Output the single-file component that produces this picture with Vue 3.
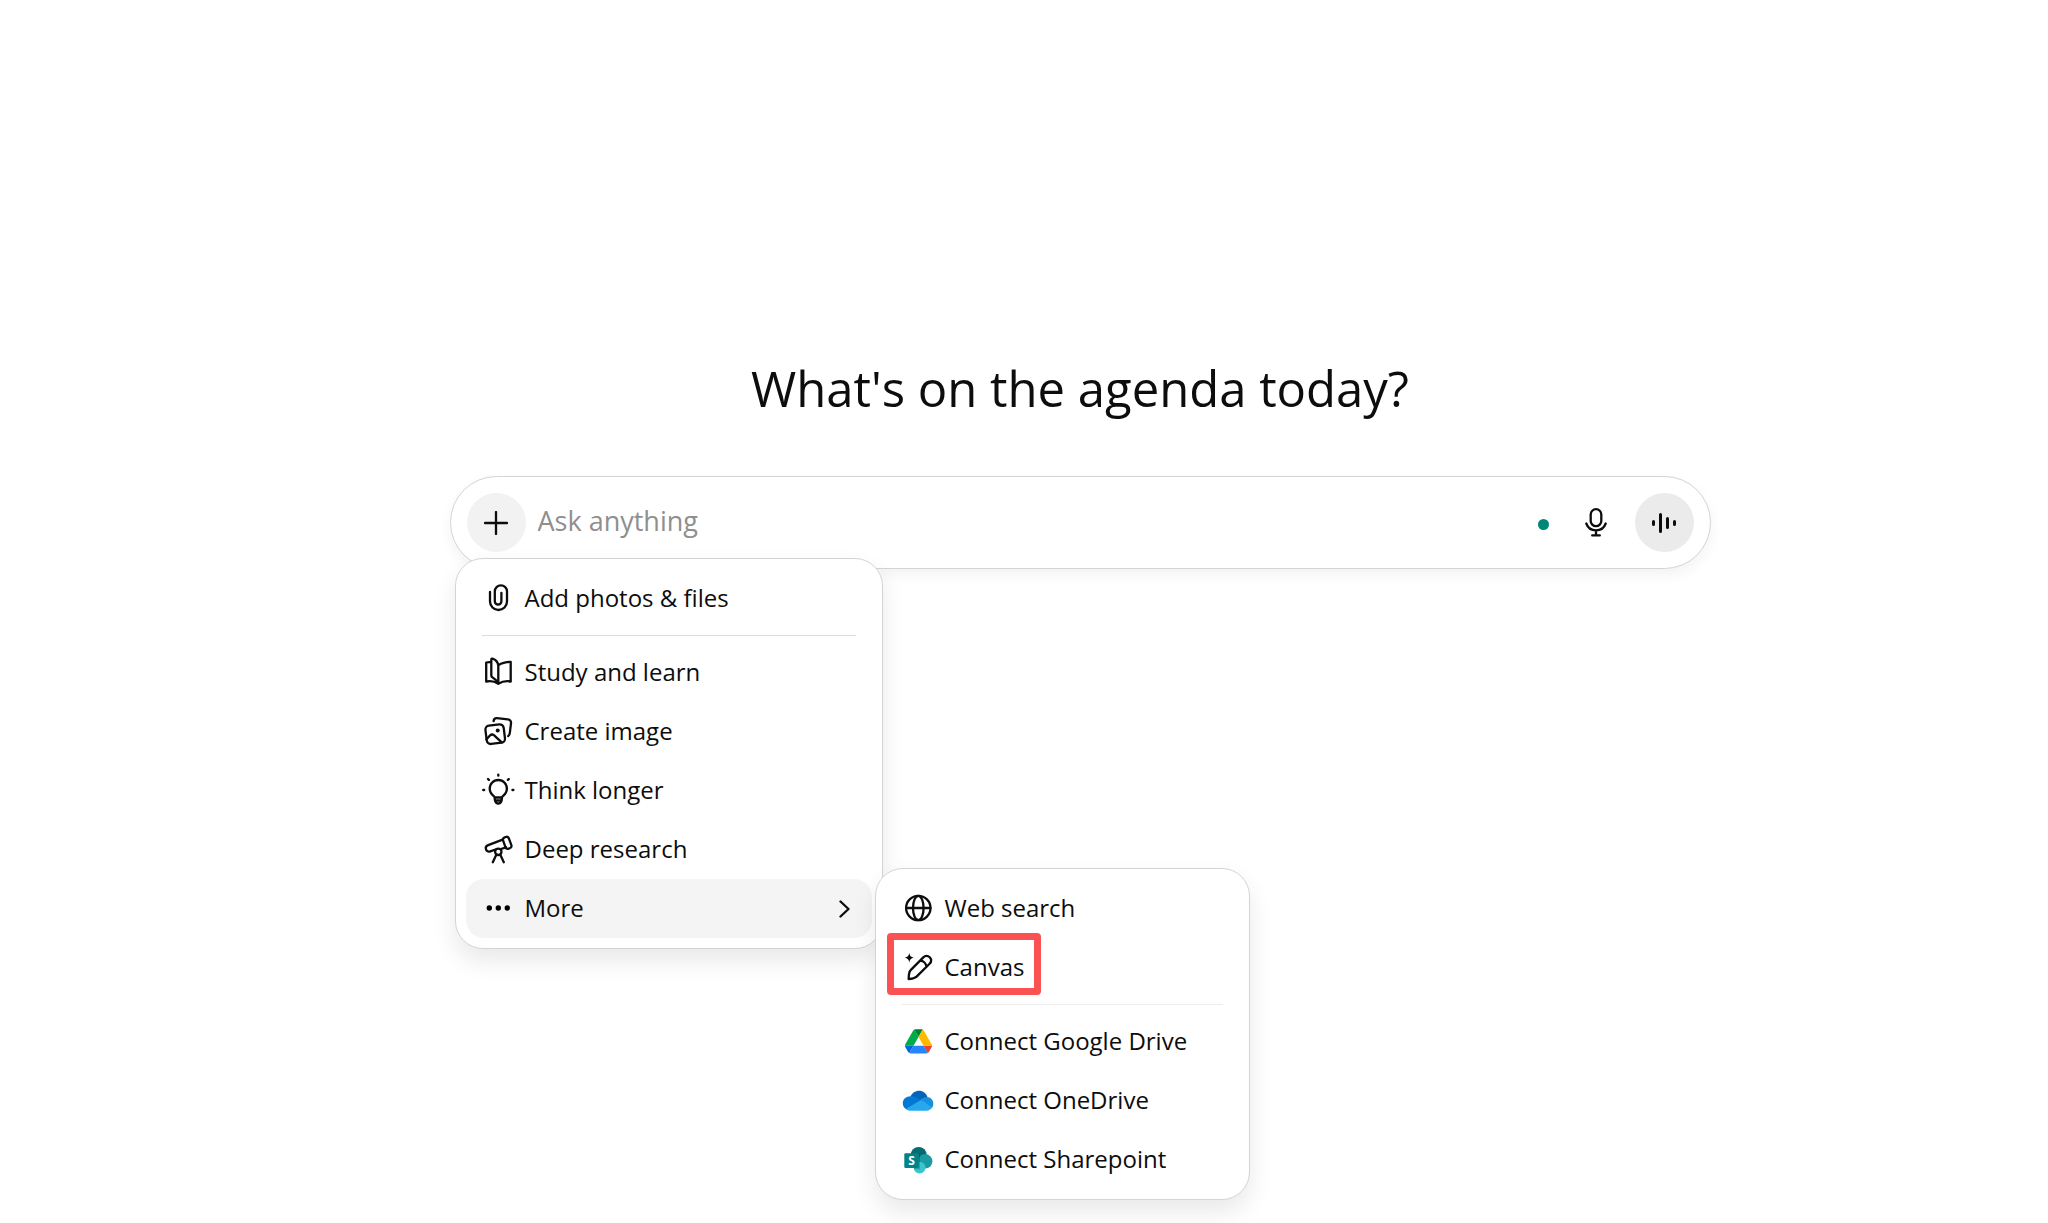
<script setup>
import { ref } from 'vue'

const prompt = ref('')
</script>

<template>
  <main class="page">
    <h1 class="title">What's on the agenda today?</h1>

    <form class="composer" @submit.prevent>
      <button type="button" class="round add" aria-label="Add files and more" aria-haspopup="menu">
        <svg width="24" height="24" viewBox="0 0 24 24" class="line"><path d="M12 1v22M1 12h22" /></svg>
      </button>
      <input v-model="prompt" class="prompt" type="text" placeholder="Ask anything" aria-label="Ask anything" />
      <span class="status"></span>
      <button type="button" class="mic" aria-label="Dictate">
        <svg width="22" height="29" viewBox="0 0 22 29" class="line">
          <rect x="5.7" y="1.2" width="10.6" height="17" rx="5.3" />
          <path d="M1.3 15.5c1.4 4 5 6.8 9.7 6.8s8.3-2.8 9.7-6.8M11 22.3v5M7.2 27.4h7.6" />
        </svg>
      </button>
      <button type="button" class="round voice" aria-label="Use voice mode">
        <svg width="26" height="22" viewBox="0 0 26 22" class="bars">
          <path d="M2.5 9.500v3M9.500 2.500v17M16.500 6.500v9M23.500 9.500v3" />
        </svg>
      </button>

      <div class="menu primary" role="menu">
        <button type="button" class="item" role="menuitem">
          <svg class="icon line" viewBox="0 0 29 29">
            <path d="M6 8v9.500a8.500 8.500 0 0 0 17 0V7.500a6.100 6.100 0 0 0-12.200 0v9.800a3.300 3.300 0 0 0 6.600 0V8.800" />
          </svg>
          <span class="label">Add photos &amp; files</span>
        </button>
        <hr class="rule" />
        <button type="button" class="item" role="menuitem">
          <svg class="icon line" viewBox="0 0 29 29">
            <path d="M14.300 25.700C11 23.500 6 22.800 2.200 23.500V4.500C4 4 5.500 4 7.300 4.200M14.300 25.700C18 23.500 22.500 22.800 26.700 23.500V3.800C22 3.800 18 4.800 14.300 7.200M14.300 25.700V7.500C13.800 4 11.500 1.500 8.500.6 7.800.4 7.300.8 7.300 1.500v16c0 1 .5 1.600 1.300 2 2.900 1.500 4.600 3.500 5.700 6.200" />
          </svg>
          <span class="label">Study and learn</span>
        </button>
        <button type="button" class="item" role="menuitem">
          <svg class="icon line" viewBox="0 0 29 29">
            <rect x="2" y="8" width="18.400" height="18.400" rx="4" transform="rotate(-7 11.200 17.200)" />
            <path d="M2.500 22.300 6 18.500c1.200-1.200 2.600-1.300 3.900-.3l7.800 7.200M9.600 4.200c.2-2 1.300-3.200 3.400-3l10.800 1.200c2.300.3 3.500 1.800 3.200 4l-1.200 9.800c-.1 1.300-.6 2.200-1.600 2.900" />
            <circle cx="13.700" cy="13.500" r="2" class="solid" />
          </svg>
          <span class="label">Create image</span>
        </button>
        <button type="button" class="item" role="menuitem">
          <svg class="icon line" viewBox="0 0 29 29">
            <path d="M10.600 21.500c0-1-.7-1.300-1.700-2.200a8.600 8.600 0 1 1 10.800 0c-1 .9-1.700 1.200-1.700 2.200zM10.600 21.500l.4 3.200c.5 1.700 1.700 2.800 3.300 2.800s2.800-1.100 3.300-2.800l.4-3.200M11 24.500h6.600" />
            <path d="M14.300-1.300v1M4 3l.9.9M24.800 3l-.9.9M-.8 14h1M28.400 14h1" />
          </svg>
          <span class="label">Think longer</span>
        </button>
        <button type="button" class="item" role="menuitem">
          <svg class="icon line" viewBox="0 0 29 29">
            <rect x="20.100" y="1.800" width="6.200" height="12" rx="2.600" transform="rotate(-20 23.200 7.800)" />
            <path d="M18.600 4.700 4.200 10.100c-2 .8-2.900 2.400-2.200 4.200.7 2 2.300 2.700 4.300 2l5.200-1.800M22 12.300l-5 1.700M12.300 19.800l-3.500 7.500M16.300 19.800l3.500 7.500" />
            <circle cx="14.300" cy="16.800" r="3.200" />
          </svg>
          <span class="label">Deep research</span>
        </button>
        <div class="branch">
          <button type="button" class="item active" role="menuitem" aria-haspopup="menu" aria-expanded="true">
            <svg class="icon" viewBox="0 0 29 29">
              <circle cx="5.300" cy="14" r="2.700" /><circle cx="14.300" cy="14" r="2.700" /><circle cx="23.300" cy="14" r="2.700" />
            </svg>
            <span class="label">More</span>
            <svg class="chevron line" width="11" height="18" viewBox="0 0 11 18"><path d="m1.500 1.500 8 7.500-8 7.500" /></svg>
          </button>

          <div class="menu secondary" role="menu">
            <button type="button" class="item" role="menuitem">
              <svg class="icon line" viewBox="0 0 29 29">
                <circle cx="14.300" cy="14" r="12.200" />
                <ellipse cx="14.300" cy="14" rx="5.300" ry="12.200" />
                <path d="M2.100 14h24.400" />
              </svg>
              <span class="label">Web search</span>
            </button>
            <button type="button" class="item marked" role="menuitem">
              <svg class="icon line" viewBox="0 0 29 29">
                <path d="M4.600 26c.1-3 .3-5.500 1-7.200.3-.8.7-1.300 1.300-1.900L19.300 4.400c2-2 4.600-1.900 6.400-.1s1.900 4.400-.1 6.400L13.100 23.100c-.6.6-1.100 1-1.900 1.300-1.700.9-3.800 1.400-6.600 1.600zM16.200 7.500c3.200.3 5.900 3 6.200 6.200" />
                <path class="spark" d="M5.300 0c.5 2.900 1.600 4.100 4.500 4.700-2.900.6-4 1.800-4.500 4.700C4.800 6.500 3.700 5.300.8 4.700 3.700 4.100 4.800 2.900 5.300 0z" />
              </svg>
              <span class="label">Canvas</span>
            </button>
            <hr class="rule faint" />
            <button type="button" class="item" role="menuitem">
              <svg class="icon" viewBox="-3 -7 93.300 93.300">
                <path fill="#0066da" d="m6.600 66.850 3.850 6.650c.8 1.400 1.950 2.500 3.300 3.300l13.750-23.800h-27.500c0 1.550.4 3.100 1.200 4.500z" />
                <path fill="#00ac47" d="m43.650 25-13.750-23.800c-1.350.8-2.500 1.900-3.300 3.300l-25.400 44a9.060 9.060 0 0 0 -1.200 4.500h27.500z" />
                <path fill="#ea4335" d="m73.550 76.800c1.350-.8 2.500-1.900 3.300-3.300l1.600-2.750 7.650-13.250c.8-1.400 1.200-2.950 1.200-4.500h-27.502l5.852 11.500z" />
                <path fill="#00832d" d="m43.650 25 13.750-23.800c-1.350-.8-2.900-1.200-4.500-1.200h-18.500c-1.600 0-3.150.45-4.500 1.200z" />
                <path fill="#2684fc" d="m59.800 53h-32.300l-13.750 23.800c1.350.8 2.900 1.200 4.500 1.200h50.800c1.600 0 3.150-.45 4.500-1.200z" />
                <path fill="#ffba00" d="m73.400 26.500-12.700-22c-.8-1.400-1.950-2.500-3.300-3.300l-13.750 23.800 16.150 28h27.450c0-1.550-.4-3.100-1.200-4.500z" />
              </svg>
              <span class="label">Connect Google Drive</span>
            </button>
            <button type="button" class="item" role="menuitem">
              <svg class="icon" viewBox="0 0 29 29">
                <path fill="#0364b8" d="M6.500 10.500C8 6.900 11.200 4.700 15 4.700c4 0 7.300 2.600 8.500 6.300L17 17z" />
                <path fill="#0078d4" d="M7 10.300c2-.3 3.900.1 5.600 1.100l6.800 4L4.500 24.200C1.200 23.200-1.200 20.700-1.200 17.200c0-3.800 3.200-7 8.200-6.900z" />
                <path fill="#1490df" d="M23 11c3.700 0 6.300 3 6.300 6.700 0 1.800-.6 3.300-1.600 4.500l-11.400-8.600c2-1.600 4-2.600 6.700-2.600z" />
                <path fill="#28a8ea" d="M2 22.700 17 14l11.200 7.500c-1.300 2-3.300 3.200-5.700 3.200H6.200c-1.700 0-3.100-.7-4.200-2z" />
              </svg>
              <span class="label">Connect OneDrive</span>
            </button>
            <button type="button" class="item" role="menuitem">
              <svg class="icon" viewBox="0 0 29 29">
                <circle cx="14.700" cy="10" r="8" fill="#036c70" />
                <circle cx="21.200" cy="16.300" r="7.200" fill="#1a9ba1" />
                <circle cx="15.600" cy="22.600" r="5.900" fill="#37c6d0" />
                <path d="M7 8.500h9v15.700H9.900z" opacity=".2" />
                <rect x=".3" y="8.300" width="14.600" height="14.600" rx="1.200" fill="#038387" />
                <text x="7.600" y="19.800" text-anchor="middle" class="letter">S</text>
              </svg>
              <span class="label">Connect Sharepoint</span>
            </button>
          </div>
        </div>
      </div>
    </form>
  </main>
</template>

<style>
body {
  margin: 0;
  background: #fff;
}
</style>

<style scoped>
.page {
  box-sizing: border-box;
  min-height: 100vh;
  padding: 358px 48px 0 160px;
  display: flex;
  flex-direction: column;
  align-items: center;
  font-family: "Open Sans", "Noto Sans", sans-serif;
  color: #0d0d0d;
}

.title {
  margin: 0 0 58px;
  font-size: 49px;
  line-height: 60px;
  font-weight: 400;
}

button {
  margin: 0;
  padding: 0;
  border: 0;
  background: none;
  font: inherit;
  color: inherit;
  cursor: pointer;
}

svg {
  display: block;
  flex: none;
}

.line {
  fill: none;
  stroke: currentColor;
  stroke-width: 2.3;
  stroke-linecap: round;
  stroke-linejoin: round;
}

.solid,
.spark {
  fill: currentColor;
  stroke: none;
}

.bars {
  fill: none;
  stroke: currentColor;
  stroke-width: 3;
  stroke-linecap: round;
}

.composer {
  position: relative;
  box-sizing: border-box;
  width: 100%;
  max-width: 1261px;
  padding: 16px;
  display: flex;
  align-items: center;
  gap: 16px;
  border: 1px solid #d4d4d4;
  border-radius: 48px;
  background: #fff;
  box-shadow: 0 6px 14px rgba(0, 0, 0, 0.05);
}

.round {
  width: 59px;
  height: 59px;
  flex: none;
  display: grid;
  place-items: center;
  border-radius: 50%;
}

.add {
  background: #f2f2f2;
}

.voice {
  background: #ebebeb;
}

.prompt {
  flex: 1;
  min-width: 0;
  margin: 0 0 0 -4px;
  padding: 0 0 4px;
  border: 0;
  outline: 0;
  background: none;
  font: inherit;
  font-size: 27px;
  line-height: 40px;
  color: inherit;
}

.prompt::placeholder {
  color: #8f8f8f;
  opacity: 1;
}

.status {
  width: 11px;
  height: 11px;
  margin: 4px 8px 0 0;
  border-radius: 50%;
  background: #008577;
}

.mic {
  width: 46px;
  height: 46px;
  display: grid;
  place-items: center;
}

.menu {
  position: absolute;
  z-index: 1;
  box-sizing: border-box;
  padding: 10px;
  border: 1px solid #d4d4d4;
  border-radius: 28px;
  background: #fff;
  box-shadow: 0 12px 24px rgba(0, 0, 0, 0.09);
}

.primary {
  top: 81px;
  left: 4px;
  width: 428px;
}

.secondary {
  top: -11px;
  left: 409px;
  width: 375px;
}

.branch {
  position: relative;
}

.item {
  position: relative;
  width: 100%;
  height: 59px;
  padding: 0 22px 0 18px;
  display: flex;
  align-items: center;
  gap: 12px;
  border-radius: 18px;
  font-size: 24px;
  line-height: 32px;
  text-align: left;
  white-space: nowrap;
}

.label {
  padding-bottom: 2px;
}

.active {
  background: #f4f4f4;
}

.icon {
  width: 29px;
  height: 29px;
  overflow: visible;
}

.chevron {
  margin-left: auto;
}

.rule {
  height: 1px;
  margin: 7px 16px;
  border: 0;
  background: #dcdcdc;
}

.faint {
  background: #ececec;
}

.marked::after {
  content: "";
  position: absolute;
  top: -5px;
  left: 1px;
  box-sizing: border-box;
  width: 154px;
  height: 62px;
  border: 7px solid #fa5252;
  border-radius: 4px;
}

.letter {
  fill: #fff;
  font-size: 12px;
  font-weight: 700;
}
</style>
